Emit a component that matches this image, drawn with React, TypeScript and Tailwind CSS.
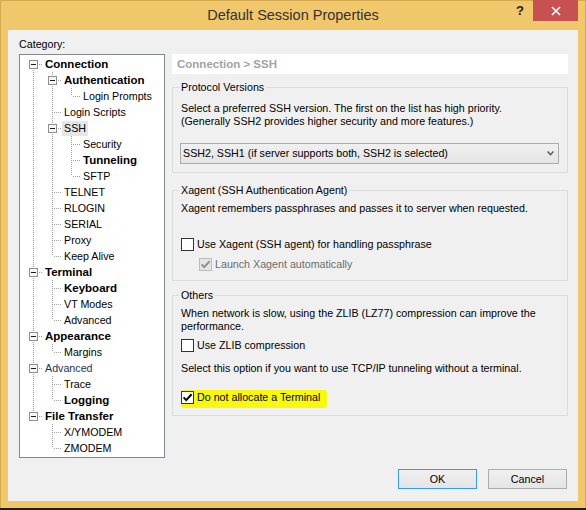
import React from 'react';

type Row = { t: string; l: number; b?: boolean; box?: boolean; sel?: boolean; hot?: boolean };

const rows: Row[] = [
  { t: 'Connection', l: 0, b: true, box: true },
  { t: 'Authentication', l: 1, b: true, box: true },
  { t: 'Login Prompts', l: 2 },
  { t: 'Login Scripts', l: 1 },
  { t: 'SSH', l: 1, box: true, sel: true },
  { t: 'Security', l: 2 },
  { t: 'Tunneling', l: 2, b: true },
  { t: 'SFTP', l: 2 },
  { t: 'TELNET', l: 1 },
  { t: 'RLOGIN', l: 1 },
  { t: 'SERIAL', l: 1 },
  { t: 'Proxy', l: 1 },
  { t: 'Keep Alive', l: 1 },
  { t: 'Terminal', l: 0, b: true, box: true },
  { t: 'Keyboard', l: 1, b: true },
  { t: 'VT Modes', l: 1 },
  { t: 'Advanced', l: 1 },
  { t: 'Appearance', l: 0, b: true, box: true },
  { t: 'Margins', l: 1 },
  { t: 'Advanced', l: 0, box: true, hot: true },
  { t: 'Trace', l: 1 },
  { t: 'Logging', l: 1, b: true },
  { t: 'File Transfer', l: 0, b: true, box: true },
  { t: 'X/YMODEM', l: 1 },
  { t: 'ZMODEM', l: 1 },
];

const isLast = (i: number) => {
  for (let j = i + 1; j < rows.length; j++) {
    if (rows[j].l < rows[i].l) return true;
    if (rows[j].l === rows[i].l) return false;
  }
  return true;
};

const cont = (i: number, lvl: number) => {
  for (let j = i - 1; j >= 0; j--) {
    if (rows[j].l === lvl) return !isLast(j);
  }
  return false;
};

const LINE = '#a0a0a0';

function TreeRow({ row, i }: { row: Row; i: number }) {
  const L = row.l;
  const w = 23 + 19 * L;
  const xl = 13 + 19 * L;
  const lines: React.ReactNode[] = [];
  for (let lvl = 0; lvl < L; lvl++) {
    if (cont(i, lvl)) {
      const x = 13 + 19 * lvl + 0.5;
      lines.push(<line key={'a' + lvl} x1={x} y1={0} x2={x} y2={16} stroke={LINE} strokeDasharray="1 1" />);
    }
  }
  if (i !== 0) lines.push(<line key="top" x1={xl + 0.5} y1={0} x2={xl + 0.5} y2={8} stroke={LINE} strokeDasharray="1 1" />);
  if (!isLast(i)) lines.push(<line key="bot" x1={xl + 0.5} y1={8} x2={xl + 0.5} y2={16} stroke={LINE} strokeDasharray="1 1" />);
  lines.push(<line key="h" x1={xl + 2} y1={8.5} x2={w} y2={8.5} stroke={LINE} strokeDasharray="1 1" />);
  return (
    <div className="flex h-[16px] items-center whitespace-nowrap">
      <svg width={w} height={16} className="shrink-0" shapeRendering="crispEdges">
        {lines}
        {row.box && (
          <g>
            <rect x={xl - 3.5} y={4.5} width={8} height={8} fill="#f7f7f7" stroke="#8e8f8f" />
            <line x1={xl - 2} y1={8.5} x2={xl + 3} y2={8.5} stroke="#1a1a1a" />
          </g>
        )}
      </svg>
      <span
        className={`self-end h-[15px] px-[2px] leading-[15px] ${row.b ? 'text-[11.5px] font-bold' : 'text-[10.7px]'} ${row.sel ? 'bg-[#e6e6e6]' : ''} ${row.hot ? 'text-[#1f3158]' : 'text-black'}`}
      >
        {row.t}
      </span>
    </div>
  );
}

function CB({ checked, disabled }: { checked?: boolean; disabled?: boolean }) {
  return (
    <span
      className={`flex h-[13px] w-[13px] shrink-0 items-center justify-center border ${disabled ? 'border-[#bcbcbc] bg-[#e6e6e6]' : 'border-[#333333] bg-white'}`}
    >
      {checked && (
        <svg width="11" height="11" viewBox="0 0 11 11">
          <path d="M1.6 5.4 L4.2 8.1 L9.6 2.2" fill="none" stroke={disabled ? '#8f8f8f' : '#000'} strokeWidth="2" />
        </svg>
      )}
    </span>
  );
}

function Group({ title, className, children }: { title: string; className?: string; children: React.ReactNode }) {
  return (
    <fieldset className={`w-full border border-[#dcdcdc] px-[6px] ${className ?? ''}`}>
      <legend className="px-[2px] leading-[15px] text-[10.7px]">{title}</legend>
      <div className="px-[2px]">{children}</div>
    </fieldset>
  );
}

export default function App() {
  return (
    <div className="w-[586px] h-[510px] overflow-hidden bg-[#1e1e1e] font-['Liberation_Sans',Arial,sans-serif] text-black">
      <div className="flex h-[508px] flex-col bg-[#f0c76a] shadow-[inset_1px_0_0_#d5ab52,inset_-1px_0_0_#d5ab52,inset_0_1px_0_#d5ab52]">
        {/* Title bar */}
        <div className="grid h-[30px] shrink-0 grid-cols-[1fr_auto_1fr] items-start">
          <div />
          <div className="text-[14.5px] leading-[30px] text-[#333333]">Default Session Properties</div>
          <div className="flex items-start justify-end pr-[8px]">
            <div className="flex h-[21px] w-[26px] items-center justify-center text-[13px] font-bold text-[#222222]">?</div>
            <div className="flex h-[21px] w-[45px] items-center justify-center bg-[#c75050]">
              <svg width="10" height="10" viewBox="0 0 10 10">
                <path d="M1 1 L9 9 M9 1 L1 9" stroke="#ffffff" strokeWidth="1.6" />
              </svg>
            </div>
          </div>
        </div>

        {/* Client area */}
        <div className="mx-[8px] flex h-[471px] flex-col bg-[#f0f0f0] pl-[11px] pr-[10px] pt-[6px] text-[10.7px]">
          <div className="flex items-start gap-[7px]">
            {/* Left: category tree */}
            <div className="w-[146px] shrink-0">
              <div className="leading-[16px]">Category:</div>
              <div className="mt-[2px] h-[404px] border border-[#828790] bg-white py-[1px]">
                {rows.map((r, i) => (
                  <TreeRow key={i} row={r} i={i} />
                ))}
              </div>
            </div>

            {/* Right: properties */}
            <div className="mt-[18px] w-[396px] shrink-0">
              <div className="h-[20px] bg-white pl-[5px] text-[11.5px] font-bold leading-[20px] text-[#a3a3a3]">
                Connection &gt; SSH
              </div>

              <Group title="Protocol Versions" className="mt-[6px] pb-[8px]">
                <p className="pt-[7px] leading-[13px]">
                  Select a preferred SSH version. The first on the list has high priority.
                  <br />
                  (Generally SSH2 provides higher security and more features.)
                </p>
                <div className="-ml-[1px] mt-[15px] flex h-[21px] w-[379px] items-center justify-between border border-[#acacac] bg-linear-to-b from-[#f0f0f0] to-[#e5e5e5] pl-[2px] pr-[4px]">
                  <span className="leading-[13px]">SSH2, SSH1 (if server supports both, SSH2 is selected)</span>
                  <svg width="7" height="5" viewBox="0 0 7 5">
                    <path d="M0.6 0.6 L3.5 3.7 L6.4 0.6" fill="none" stroke="#5a5a5a" strokeWidth="1.5" />
                  </svg>
                </div>
              </Group>

              <Group title="Xagent (SSH Authentication Agent)" className="mt-[10px] pb-[9px]">
                <p className="pt-[4px] leading-[13px]">
                  Xagent remembers passphrases and passes it to server when requested.
                </p>
                <div className="mt-[23px] flex h-[13px] items-center">
                  <CB />
                  <span className="ml-[3px] leading-[13px]">Use Xagent (SSH agent) for handling passphrase</span>
                </div>
                <div className="ml-[18px] mt-[7px] flex h-[13px] items-center">
                  <CB checked disabled />
                  <span className="ml-[3px] leading-[13px] text-[#6d6d6d]">Launch Xagent automatically</span>
                </div>
              </Group>

              <Group title="Others" className="mt-[7px] pb-[7px]">
                <p className="pt-[4px] leading-[13px]">
                  When network is slow, using the ZLIB (LZ77) compression can improve the
                  <br />
                  performance.
                </p>
                <div className="mt-[6px] flex h-[13px] items-center">
                  <CB />
                  <span className="ml-[3px] leading-[13px]">Use ZLIB compression</span>
                </div>
                <p className="mt-[10px] leading-[13px]">
                  Select this option if you want to use TCP/IP tunneling without a terminal.
                </p>
                <div className="mt-[15px] h-[18px] w-[146px] rounded-[3px] bg-[#f9f90a] pt-[1px]">
                  <div className="flex h-[13px] items-center">
                    <CB checked />
                    <span className="ml-[3px] leading-[13px]">Do not allocate a Terminal</span>
                  </div>
                </div>
              </Group>
            </div>
          </div>

          {/* Buttons */}
          <div className="mt-[11px] flex justify-end gap-[11px] pr-[1px]">
            <button className="flex h-[20px] w-[79px] items-center justify-center border border-[#3399ff] bg-linear-to-b from-[#f0f0f0] to-[#e5e5e5] text-[10.7px]">
              OK
            </button>
            <button className="flex h-[20px] w-[79px] items-center justify-center border border-[#acacac] bg-linear-to-b from-[#f0f0f0] to-[#e5e5e5] text-[10.7px]">
              Cancel
            </button>
          </div>
        </div>
      </div>
    </div>
  );
}
